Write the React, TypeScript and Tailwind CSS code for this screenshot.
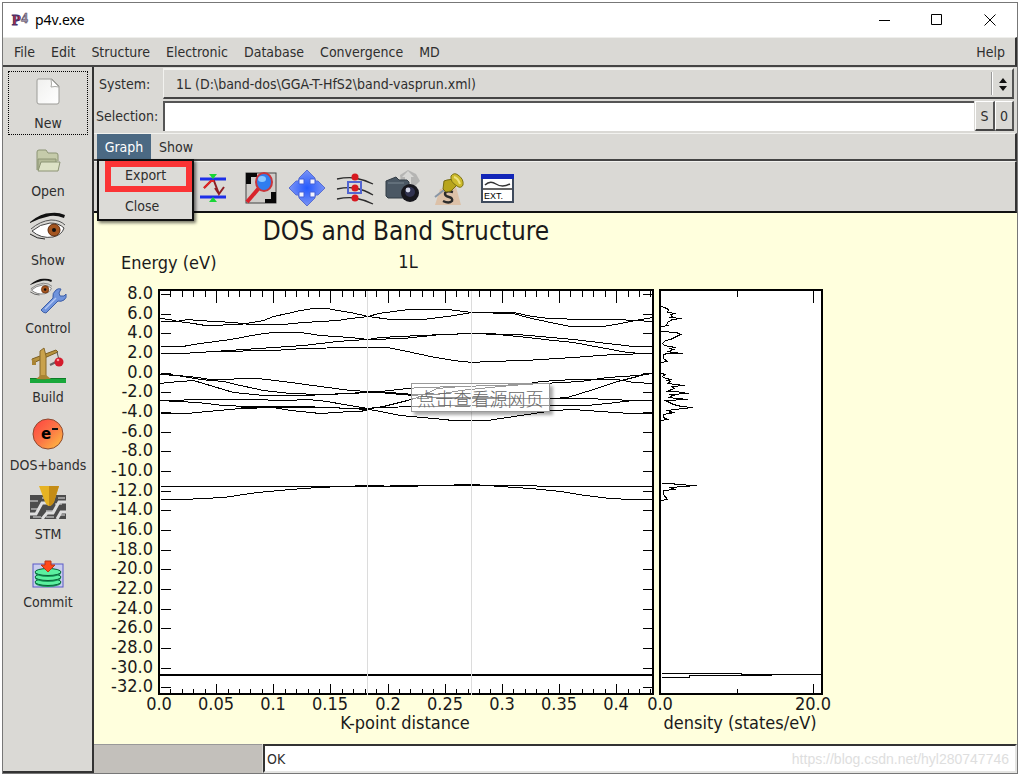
import type { ReactNode } from 'react';

const menus = ['File', 'Edit', 'Structure', 'Electronic', 'Database', 'Convergence', 'MD'];

const NewIcon = () => (
  <svg width="40" height="36" viewBox="0 0 40 36">
    <defs>
      <linearGradient id="page" x1="0" y1="0" x2="1" y2="1">
        <stop offset="0" stopColor="#f0f0ee" />
        <stop offset="1" stopColor="#ffffff" />
      </linearGradient>
    </defs>
    <path d="M10 6h14l7 7v16q0 2-2 2H11q-2 0-2-2V8q0-2 1-2z" fill="url(#page)" stroke="#9c9c98" />
    <path d="M23 6q1 6 0 8 4-1 8 0z" fill="#fff" stroke="#aaaaa6" />
  </svg>
);

const OpenIcon = () => (
  <svg width="40" height="36" viewBox="0 0 40 36">
    <path d="M9 29V11q0-2 2-2h7l2 3h8q2 0 2 2v6" fill="#c5cbaa" stroke="#8c9474" />
    <path d="M10 29V18h18v3" fill="#b4bb98" stroke="#8c9474" />
    <path d="M13 21h19l-2 9H10z" fill="#dde2c6" stroke="#8c9474" />
  </svg>
);

const EyeShape = () => (
  <>
    <path d="M2 12Q13 3 23 3q7-1 14 2l-1 3q-8-3-14-2Q12 8 2 13z" fill="#111" />
    <path d="M4 21q8-7 18-8 9 0 14 5-2 7-11 9-12 2-21-6z" fill="#fff" stroke="#444" />
    <path d="M3 19q9-8 20-9 9 0 14 5" fill="none" stroke="#555" />
    <path d="M2 24q7 5 15 5" fill="none" stroke="#222" />
    <circle cx="26" cy="20" r="6" fill="#a4551f" stroke="#5d2b0c" />
    <circle cx="26" cy="20" r="2" fill="#111" />
  </>
);

const ShowIcon = () => (
  <svg width="40" height="36" viewBox="0 0 40 36">
    <EyeShape />
  </svg>
);

const ControlIcon = () => (
  <svg width="40" height="36" viewBox="0 0 40 36">
    <g transform="translate(1 -1) scale(.62)">
      <EyeShape />
    </g>
    <path
      d="M13 32l12-12q-1-5 3-8 2-2 5-1l-2 4 1 3 4 0 2-2q1 4-2 6-3 2-6 1L18 35q-3 0-5-3z"
      fill="#6f93dc"
      stroke="#3d5ea6"
    />
    <path d="M17 31l11-11" stroke="#b3c8f3" strokeWidth="1.5" />
  </svg>
);

const BuildIcon = () => (
  <svg width="40" height="36" viewBox="0 0 40 36">
    <path d="M2 31h36v5H2z" fill="#19a83b" />
    <path d="M2 31h36v1H2z" fill="#0d7d27" />
    <path d="M4 12l24-9 2 2-25 11z" fill="#b8933e" stroke="#7c5f22" />
    <path d="M12 4l4-3 2 8v23h-6z" fill="#c9a24c" stroke="#86682a" />
    <path d="M8 32l5-4h5l5 4zM4 12v6h4v-4z" fill="#a98434" />
    <path d="M29 5l2 8" stroke="#555" />
    <path d="M22 18l6-3" stroke="#666" strokeWidth="2" />
    <circle cx="31" cy="15" r="4.5" fill="#d41b2c" />
    <circle cx="30" cy="13" r="1.3" fill="#ff9a9a" />
  </svg>
);

const DosIcon = () => (
  <svg width="40" height="36" viewBox="0 0 40 36">
    <defs>
      <linearGradient id="electron" x1="0" y1="0" x2="1" y2="1">
        <stop offset="0" stopColor="#ff4040" />
        <stop offset=".5" stopColor="#fb7546" />
        <stop offset="1" stopColor="#ffc640" />
      </linearGradient>
    </defs>
    <circle cx="20" cy="19" r="15" fill="url(#electron)" stroke="#8c4a30" />
    <text x="13" y="24" fontSize="15" fontWeight="700" fontFamily="DejaVu Sans">e</text>
    <path d="M24 14h6" stroke="#111" strokeWidth="2" />
  </svg>
);

const StmIcon = () => (
  <svg width="40" height="36" viewBox="0 0 40 36">
    <path d="M2 11h36v24H2z" fill="#4c4c4c" />
    <path d="M2 17h8M14 14h5M3 25h9M18 27h9M5 33h8M27 20h7M18 33h8M30 14h7M31 31h6" stroke="#999" strokeWidth="2" />
    <path d="M2 30h6l6-11h5M14 35l5-6h6l6-11h7M29 35l4-7h5" fill="none" stroke="#dedede" strokeWidth="3" />
    <path d="M11 2h20l-5 16q-5 8-9 0z" fill="#e6b324" />
    <path d="M21 2h10l-5 16q-2 4-5 4z" fill="#c48c16" />
  </svg>
);

const CommitIcon = () => (
  <svg width="40" height="36" viewBox="0 0 40 36">
    <rect x="5" y="12" width="30" height="23" fill="#c9cdee" stroke="#5a5ac8" />
    {[30, 25, 20].map((y) => (
      <g key={y}>
        <ellipse cx="20" cy={y + 1} rx="13" ry="4" fill="#149a57" />
        <ellipse cx="20" cy={y} rx="13" ry="3.5" fill="#5cf0a0" stroke="#0b5f38" />
      </g>
    ))}
    <path d="M17 9h6v4h4l-7 7-7-7h4z" fill="#ff4a1c" stroke="#b93618" />
  </svg>
);

const sidebar: { label: string; icon: ReactNode }[] = [
  { label: 'New', icon: <NewIcon /> },
  { label: 'Open', icon: <OpenIcon /> },
  { label: 'Show', icon: <ShowIcon /> },
  { label: 'Control', icon: <ControlIcon /> },
  { label: 'Build', icon: <BuildIcon /> },
  { label: 'DOS+bands', icon: <DosIcon /> },
  { label: 'STM', icon: <StmIcon /> },
  { label: 'Commit', icon: <CommitIcon /> },
];

const tools: { label: string; icon: ReactNode }[] = [
  {
    label: 'Fit energy range',
    icon: (
      <svg width="36" height="36" viewBox="0 0 36 36">
        <path d="M5 9h26M5 27h26" stroke="#1c2fe8" strokeWidth="3" />
        <path d="M14 4h8l-4 5zM14 32h8l-4-5z" fill="#19d637" />
        <path d="M9 18l7-7h3l5 13 5-7M24 24l-4-6" fill="none" stroke="#8e1f24" strokeWidth="2" />
        <path d="M9 18l7-7h3" fill="none" stroke="#e02626" strokeWidth="2" />
      </svg>
    ),
  },
  {
    label: 'Zoom',
    icon: (
      <svg width="36" height="36" viewBox="0 0 36 36">
        <rect x="4" y="3" width="30" height="30" fill="#cfcdc9" stroke="#444" />
        <path d="M4 3h11v4H9v7H4zM34 33H23v-4h6v-7h5z" fill="#080808" />
        <path d="M5 32l12-14" stroke="#d9232b" strokeWidth="4" />
        <ellipse cx="22" cy="12" rx="8" ry="9" fill="#2f7df0" stroke="#c9353b" strokeWidth="2" />
        <ellipse cx="20" cy="9" rx="4" ry="3" fill="#8cc8ff" />
      </svg>
    ),
  },
  {
    label: 'Move',
    icon: (
      <svg width="36" height="36" viewBox="0 0 36 36">
        <defs>
          <radialGradient id="move">
            <stop offset="0" stopColor="#2459ff" />
            <stop offset="1" stopColor="#7a93f4" />
          </radialGradient>
        </defs>
        <path d="M18 0l8 8v2l1 1h2l7 7-7 7h-2l-1 1v2l-8 8-8-8v-2l-1-1H7l-7-7 7-7h2l1-1V8z" fill="url(#move)" stroke="#5a70cf" />
        <path d="M10 9h5v5h-5zM21 9h5v5h-5zM10 22h5v5h-5zM21 22h5v5h-5z" fill="#f2f2ff" stroke="#4561d8" />
      </svg>
    ),
  },
  {
    label: 'Select band',
    icon: (
      <svg width="38" height="36" viewBox="0 0 38 36">
        <path d="M1 9q10-2 18-1 10 2 18 6M1 19q10-2 18-1 10 2 18 7M1 29q10-2 18-1 10 2 18 6" fill="none" stroke="#2c2c2c" strokeWidth="1.3" />
        <rect x="12" y="12" width="13" height="11" fill="none" stroke="#5265d2" strokeWidth="2" />
        <circle cx="19" cy="7" r="3.5" fill="#d71920" />
        <circle cx="19" cy="18" r="3.5" fill="#d71920" />
        <circle cx="19" cy="28" r="3.5" fill="#d71920" />
      </svg>
    ),
  },
  {
    label: 'Snapshot',
    icon: (
      <svg width="36" height="36" viewBox="0 0 36 36">
        <path d="M15 5l8-5 8 4 4 7-7 7H17z" fill="#b5b5b3" />
        <path d="M20 14V7h-3l6-6 6 6h-3v7z" fill="#d8d8d5" />
        <path d="M1 11l5-2 5-2 3 3h8l2 2v16H3l-2-2z" fill="#4b5864" stroke="#333c44" />
        <path d="M3 13h16" stroke="#7b8791" />
        <circle cx="25" cy="23" r="9" fill="#17171d" />
        <circle cx="25" cy="22" r="5" fill="#30324f" />
        <circle cx="23" cy="20" r="2.4" fill="#d3d7e8" />
      </svg>
    ),
  },
  {
    label: 'Pin',
    icon: (
      <svg width="36" height="36" viewBox="0 0 36 36">
        <path d="M8 19l16-2 5 18H3z" fill="#dcc1a8" />
        <path d="M3 27l9-7" stroke="#8896a6" strokeWidth="2" />
        <path d="M21 22q-8-2-8 2 0 2 4 3t3 4q-3 3-9 0" fill="none" stroke="#2b2b2b" strokeWidth="2.4" />
        <path d="M12 11l3-1 7-1 3 6-6 6-5 1-3-3z" fill="#b8a51c" stroke="#766b10" />
        <path d="M19 6q3-4 7-1 6 4 5 10-2 4-6 1-7-4-6-10z" fill="#cdbb2d" stroke="#7d7212" />
        <path d="M22 7q4 1 6 7" stroke="#efe37c" strokeWidth="2" fill="none" />
      </svg>
    ),
  },
  {
    label: 'External plot',
    icon: (
      <svg width="36" height="36" viewBox="0 0 36 36">
        <rect x="3" y="5" width="31" height="27" fill="#fff" stroke="#3e4a5c" strokeWidth="2" />
        <path d="M2 4h33v5H2z" fill="#1226b8" />
        <path d="M6 15q5-5 11-1 6 4 14 0M4 19h29" fill="none" stroke="#333" strokeWidth="1.5" />
        <text x="5" y="29" fontSize="9" fontFamily="Liberation Sans">EXT.</text>
      </svg>
    ),
  },
];

const bands = [
  '160,318 169,319 178,321 193,323 205,325 240,324 252,322 263,320 273,316 287,313 300,310 313,308 327,308 337,310 350,312 368,316 390,319 422,319 447,316 472,312 513,313 527,317 550,322 570,326 603,326 620,323 640,319 653,317',
  '160,321 176,321 188,319 197,320 215,321 233,322 250,324 283,324 303,322 337,320 350,318 368,316 378,313 408,309 447,309 472,312 513,312 532,316 548,318 585,319 617,319 633,320 653,321',
  '160,346 182,346 200,343 230,339 257,334 273,332 300,332 320,335 350,337 368,339 403,338 440,334 473,333 517,334 540,336 573,339 607,343 633,346 653,346',
  '160,353 182,353 213,351 243,349 273,347 303,345 337,341 350,340 368,339 380,337 420,335 443,334 473,333 497,334 527,337 553,340 573,342 600,347 627,352 642,353 653,353',
  '160,353 182,353 213,351 273,350 303,348 350,347 387,347 407,351 430,356 453,360 472,362 487,361 525,360 573,357 613,354 653,353',
  '160,374 167,374 197,377 210,379 257,378 283,381 320,386 350,390 368,391 380,391 407,388 420,387 460,386 523,384 540,381 573,379 617,379 633,382 653,383',
  '160,374 177,375 200,379 223,381 240,385 263,390 290,393 320,394 350,393 368,391 390,393 413,395 440,398 553,398 567,397 593,389 617,381 637,376 647,373 653,373',
  '160,383 167,382 193,380 213,386 233,392 263,395 303,395 350,393 368,392 390,392 413,394 437,394 460,390 500,386 523,384 580,381 607,377 637,375 653,373',
  '160,400 177,400 190,399 247,399 287,400 307,399 327,401 343,404 368,408 383,406 407,400 417,397 437,388 460,386',
  '160,400 177,401 197,402 223,405 247,406 303,406 350,408 368,408 380,407 417,406 473,405 587,405 607,403 633,400 653,400',
  '417,398 440,397 553,398 585,398 633,400 653,400',
  '160,413 187,413 207,411 240,408 273,407 290,410 320,413 350,411 360,411 368,409 380,411 400,415 433,418 453,420 487,420 507,417 527,414 553,410 573,409 600,411 630,413 653,413',
  '240,407 273,407 330,407 368,409',
  '160,486 360,486 420,485 653,486',
  '160,499 182,499 223,497 257,492 290,489 317,487 367,485 400,486 472,484 500,486 530,488 560,491 585,495 610,498 630,499 653,499',
];

const density = [
  '661,306 664,307 668,309 667,312 675,313 670,314 672,316 670,317 681,318 672,319 667,322 666,325 668,325 661,326',
  '661,331 676,332 680,334 674,337 670,339 665,340 662,343 664,345 669,346 675,347 669,348 673,349 668,351 672,352 682,353 667,353 663,354 663,358 667,361 661,362',
  '661,373 665,374 662,376 665,378 671,379 667,380 670,381 667,383 684,385 671,386 674,388 666,391 675,391 688,393 669,394 673,395 668,397 687,399 665,400 669,402 673,404 681,406 692,407 666,410 671,411 668,413 674,412 663,414 663,417 667,419 661,420',
  '661,483 674,483 674,484 696,485 670,487 674,489 663,490 663,494 667,499 661,500',
];

const levels = Array.from({ length: 21 }, (_, i) => 8 - i * 2);
const kTicks = Array.from({ length: 44 }, (_, i) => i);
const kLabels = ['0.0', '0.05', '0.1', '0.15', '0.2', '0.25', '0.3', '0.35', '0.4'];

const levelY = (i: number) => Math.round(294 + i * 19.66);
const kX = (i: number) => Math.round(159 + i * 11.43);

function BandChart() {
  return (
    <svg
      className="block shrink-0"
      width="920"
      height="530"
      viewBox="94 213 920 530"
      fontFamily="'DejaVu Sans Condensed', 'Noto Sans', sans-serif"
      fontSize="18"
      fill="#1a1a1a"
    >
      <text x="406" y="240" fontSize="26" textAnchor="middle">DOS and Band Structure</text>
      <text x="121" y="269">Energy (eV)</text>
      <text x="408" y="268" textAnchor="middle">1L</text>

      <g shapeRendering="crispEdges" fill="none" stroke="#000">
        <rect x="159" y="290" width="494" height="404" fill="#fff" strokeWidth="2" />
        <rect x="660" y="290" width="162" height="404" fill="#fff" strokeWidth="2" />
        {/* one pixel lines sit on the pixel centres */}
        <g transform="translate(.5 .5)">
          {levels.map((v, i) => (
            <path key={v} d={`M160 ${levelY(i)}h10M642 ${levelY(i)}h10`} />
          ))}
          {kTicks.slice(1).map((i) => (
            <path key={i} d={i % 5 ? `M${kX(i)} 290v6M${kX(i)} 688v6` : `M${kX(i)} 290v12M${kX(i)} 683v11`} />
          ))}
          <path d="M737 290v6M813 290v12M737 688v6M813 683v11" />
          {bands.map((points) => (
            <polyline key={points} points={points} />
          ))}
          {density.map((points) => (
            <polyline key={points} points={points} />
          ))}
          <path d="M661 673h80v1h80M661 677h28v-2h82v-1" />
        </g>
        <path d="M160 675h493" strokeWidth="2" />
      </g>
      <path d="M367 291h1v404h-1zM471 291h1v404h-1z" fill="#dcdcdc" shapeRendering="crispEdges" />

      {levels.map((v, i) => (
        <text key={v} x="153" y={levelY(i) + 5} textAnchor="end">{v.toFixed(1)}</text>
      ))}
      {kLabels.map((label, i) => (
        <text key={label} x={kX(i * 5)} y="710" textAnchor="middle">{label}</text>
      ))}
      <text x="660" y="710" textAnchor="middle">0.0</text>
      <text x="813" y="710" textAnchor="middle">20.0</text>
      <text x="405" y="729" textAnchor="middle">K-point distance</text>
      <text x="740" y="729" textAnchor="middle">density (states/eV)</text>
    </svg>
  );
}

export default function App() {
  return (
    <div className="flex min-h-screen bg-white pt-[2px] pr-[3px] pb-[2px] pl-[2px] font-['DejaVu_Sans_Condensed','Noto_Sans',sans-serif] text-sm text-[#2e2e2e]">
      <div className="flex min-w-0 flex-1 flex-col border border-[#777] bg-[#dad9d5]">
        <header className="flex h-[34px] shrink-0 items-center bg-white pl-2 font-['Noto_Sans',sans-serif] text-sm text-black">
          <svg width="20" height="18" viewBox="0 0 20 18" className="mr-1">
            <text x="1" y="14" fontSize="14" fontWeight="700" fontFamily="Liberation Serif" fill="#d22a35" stroke="#47306b">P</text>
            <text x="10" y="12" fontSize="14" fontWeight="700" fontFamily="Liberation Serif" fill="#9a8fa5" stroke="#54465f" strokeWidth=".5">4</text>
          </svg>
          <h1 className="flex-1">p4v.exe</h1>
          <button aria-label="Minimize" className="flex h-full w-[52px] items-center justify-center">
            <svg width="12" height="12" viewBox="0 0 12 12" stroke="#000"><path d="M0 6.5h11" /></svg>
          </button>
          <button aria-label="Maximize" className="flex h-full w-[52px] items-center justify-center">
            <svg width="12" height="12" viewBox="0 0 12 12" fill="none" stroke="#000"><path d="M.5.5h10v10H.5z" /></svg>
          </button>
          <button aria-label="Close window" className="flex h-full w-[54px] items-center justify-center">
            <svg width="12" height="12" viewBox="0 0 12 12" stroke="#000"><path d="M.5.5l11 11M11.5.5l-11 11" /></svg>
          </button>
        </header>

        <nav className="flex h-[30px] shrink-0 items-center border-t border-r-2 border-b-2 border-t-[#efefec] border-r-[#333] border-b-[#444] pr-2.5 pl-[3px]">
          {menus.map((name) => (
            <button key={name} className="px-2">{name}</button>
          ))}
          <button className="ml-auto">Help</button>
        </nav>

        <div className="flex min-h-0 flex-1">
          <aside className="w-[91px] shrink-0 border-r-2 border-b-2 border-[#333] pt-1 pl-[5px]">
            <div className="flex h-[543px] w-20 flex-col justify-between">
              {sidebar.map(({ label, icon }, i) => (
                <button
                  key={label}
                  className={`flex h-16 flex-col items-center justify-between border border-dotted pt-px pb-px whitespace-nowrap ${
                    i === 0 ? 'border-black' : 'border-transparent'
                  }`}
                >
                  {icon}
                  <span className="leading-5">{label}</span>
                </button>
              ))}
            </div>
          </aside>

          <main className="flex min-w-0 flex-1 flex-col">
            <div className="flex h-8 shrink-0 items-center pt-px pr-[3px]">
              <label htmlFor="system" className="w-[69px] pl-[5px]">System:</label>
              <div className="relative h-full flex-1">
                <select
                  id="system"
                  className="h-full w-full appearance-none border-t-2 border-r-2 border-b-2 border-l border-t-[#f2f2ef] border-r-[#555] border-b-[#444] border-l-[#f2f2ef] pl-3"
                >
                  <option>1L (D:\band-dos\GGA-T-HfS2\band-vasprun.xml)</option>
                </select>
                <svg className="pointer-events-none absolute top-1 right-1.5" width="18" height="24" viewBox="0 0 18 24">
                  <path d="M1.5 0v23" stroke="#999" />
                  <path d="M2.5 0v23" stroke="#fff" />
                  <path d="M9 11l4-5 4 5zM9 14h8l-4 5z" fill="#111" />
                </svg>
              </div>
            </div>

            <div className="flex h-[34px] shrink-0 items-center py-[2px] pr-[3px]">
              <label htmlFor="selection" className="w-[69px] pl-[2px]">Selection:</label>
              <input
                id="selection"
                className="h-full min-w-0 flex-1 border-t-2 border-l-2 border-[#555] bg-white px-2 outline-none"
              />
              <button className="ml-px h-full w-5 border-t border-r-2 border-b-2 border-l border-t-white border-r-[#555] border-b-[#444] border-l-white">S</button>
              <button className="h-full w-[19px] border-t border-r-2 border-b-2 border-l border-t-white border-r-[#555] border-b-[#444] border-l-white">0</button>
            </div>

            <div className="relative flex h-[28px] shrink-0 border-t border-r-2 border-b-2 border-t-[#f2f2ef] border-r-[#333] border-b-[#444] pl-[3px]">
              <button className="w-[54px] bg-[#4b6983] text-white" aria-expanded="true">Graph</button>
              <button className="px-2">Show</button>
              <div className="absolute top-[25px] left-[3px] z-10 flex w-[97px] flex-col border-2 border-[#111] bg-[#dcdbd7] shadow-[2px_2px_3px_#0008]">
                <button className="ml-1.5 h-[31px] w-[87px] border-[6px] border-[#fb3435] pb-1 pl-3.5 text-left leading-4">Export</button>
                <button className="h-[27px] pl-[26px] text-left">Close</button>
              </div>
            </div>

            <div className="flex h-[52px] shrink-0 items-center gap-[11px] border-t border-r-2 border-b-2 border-t-[#f2f2ef] border-r-[#333] border-b-[#111] pt-[2px] pl-[101px]">
              {tools.map(({ label, icon }) => (
                <button key={label} aria-label={label}>{icon}</button>
              ))}
            </div>

            <section className="relative flex flex-1 overflow-hidden bg-[#ffffdd]">
              <BandChart />
              <div className="absolute top-[170px] left-[317px] flex h-[29px] w-[139px] items-center justify-center border border-[#999] bg-white/60 font-['Noto_Sans_CJK_SC',sans-serif] text-lg leading-6 font-light text-[#666] shadow-[3px_3px_3px_#0005]">
                点击查看源网页
              </div>
            </section>

            <footer className="flex h-[29px] shrink-0">
              <div className="w-[168px] border-t border-[#999] bg-[#c3c0bb]" />
              <div className="ml-px flex flex-1 items-center justify-between border-t-2 border-r-2 border-b-2 border-l-2 border-t-[#333] border-r-[#e5e5e3] border-b-[#e5e5e3] border-l-[#333] bg-white pr-1.5 pl-[2px]">
                <output>OK</output>
                <span className="font-['Liberation_Sans',sans-serif] text-[#dedede]">https://blog.csdn.net/hyl280747746</span>
              </div>
            </footer>
          </main>
        </div>
      </div>
    </div>
  );
}
